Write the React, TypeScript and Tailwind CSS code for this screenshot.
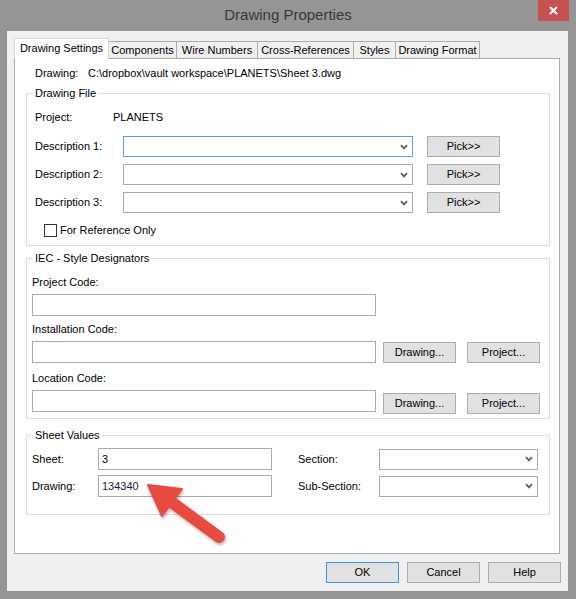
import React from 'react'

const font = { fontFamily: '"Liberation Sans", Arial, sans-serif' }

function Chevron() {
  return (
    <svg width="8" height="6" viewBox="0 0 8 6" className="shrink-0">
      <path d="M1 1.2 L4 4.4 L7 1.2" fill="none" stroke="#5f5f5f" strokeWidth="1.8" />
    </svg>
  )
}

function Combo({ width, focused = false }: { width: string; focused?: boolean }) {
  return (
    <div
      className={`${width} h-[21px] bg-white border flex items-center justify-end pr-[4px] ${
        focused ? 'border-[#569de5]' : 'border-[#ababab]'
      }`}
    >
      <Chevron />
    </div>
  )
}

function Btn({ label, width = 'w-[73px]', primary = false }: { label: string; width?: string; primary?: boolean }) {
  return (
    <button
      className={`${width} h-[21px] shrink-0 bg-[#e1e1e1] border text-[11px] leading-[13px] text-black flex items-center justify-center ${
        primary ? 'border-[#3c93e4]' : 'border-[#adadad]'
      }`}
    >
      {label}
    </button>
  )
}

function Group({ title, height, children }: { title: string; height: string; children: React.ReactNode }) {
  return (
    <div className={`relative ml-[11px] w-[524px] ${height} border border-[#dcdcdc]`}>
      <span className="absolute left-[6px] top-[-7px] bg-white px-[2px] leading-[13px]">{title}</span>
      {children}
    </div>
  )
}

const tabs = [
  { label: 'Components', w: 'w-[69px]' },
  { label: 'Wire Numbers', w: 'w-[82px]' },
  { label: 'Cross-References', w: 'w-[97px]' },
  { label: 'Styles', w: 'w-[43px]' },
  { label: 'Drawing Format', w: 'w-[85px]' },
]

export default function App() {
  return (
    <div
      className="relative w-[576px] h-[599px] bg-[#959595] text-[11px] leading-[13px] text-black overflow-hidden"
      style={font}
    >
      {/* title bar */}
      <div className="relative h-[31px] flex items-center justify-center">
        <span className="text-[15px] leading-[18px] text-[#383838] -mt-[1px]">Drawing Properties</span>
        <div className="absolute right-[7px] top-0 w-[31px] h-[21px] bg-[#c75050] flex items-center justify-center">
          <svg width="9" height="9" viewBox="0 0 9 9">
            <path d="M1 1 L8 8 M8 1 L1 8" stroke="white" strokeWidth="2" />
          </svg>
        </div>
      </div>

      {/* client area */}
      <div className="ml-[7px] w-[561px] h-[560px] bg-[#f0f0f0] flex flex-col">
        {/* tabs */}
        <div className="mt-[7px] ml-[7px] h-[20px] flex items-end">
          <div className="relative z-10 w-[95px] h-[21px] -mb-[1px] bg-white border border-b-0 border-[#d9d9d9] flex items-center justify-center pb-[2px]">
            Drawing Settings
          </div>
          {tabs.map((t) => (
            <div
              key={t.label}
              className={`${t.w} h-[17px] -ml-[1px] bg-[#f0f0f0] border border-b-0 border-[#acacac] flex items-center justify-center`}
            >
              {t.label}
            </div>
          ))}
        </div>

        {/* tab panel */}
        <div className="ml-[7px] w-[546px] h-[496px] bg-white border border-[#acacac]">
          <div className="mt-[8px] pl-[20px] h-[13px] flex items-center">
            <span className="w-[53px]">Drawing:</span>
            <span>C:\dropbox\vault workspace\PLANETS\Sheet 3.dwg</span>
          </div>

          <div className="mt-[13px]">
            <Group title="Drawing File" height="h-[153px]">
              <div className="pt-[14px] pl-[8px]">
                <div className="h-[18px] flex items-center">
                  <span className="w-[78px]">Project:</span>
                  <span>PLANETS</span>
                </div>
                {['Description 1:', 'Description 2:', 'Description 3:'].map((d, i) => (
                  <div key={d} className={`h-[21px] flex items-center ${i === 0 ? 'mt-[10px]' : 'mt-[7px]'}`}>
                    <span className="w-[88px]">{d}</span>
                    <Combo width="w-[290px]" focused={i === 0} />
                    <div className="ml-[14px]">
                      <Btn label="Pick>>" />
                    </div>
                  </div>
                ))}
                <div className="mt-[11px] h-[13px] flex items-center pl-[9px]">
                  <div className="w-[13px] h-[13px] bg-white border border-[#333333]" />
                  <span className="ml-[3px]">For Reference Only</span>
                </div>
              </div>
            </Group>
          </div>

          <div className="mt-[12px]">
            <Group title="IEC - Style Designators" height="h-[161px]">
              <div className="pt-[16px] pl-[5px]">
                <div className="h-[14px] flex items-center">Project Code:</div>
                <div className="mt-[5px] w-[344px] h-[22px] border border-[#ababab]" />
                <div className="mt-[6px] h-[14px] flex items-center">Installation Code:</div>
                <div className="mt-[5px] h-[22px] flex items-center">
                  <div className="w-[344px] h-[22px] border border-[#ababab]" />
                  <div className="ml-[7px]">
                    <Btn label="Drawing..." />
                  </div>
                  <div className="ml-[11px]">
                    <Btn label="Project..." />
                  </div>
                </div>
                <div className="mt-[8px] h-[14px] flex items-center">Location Code:</div>
                <div className="mt-[5px] h-[22px] flex items-center">
                  <div className="w-[344px] h-[22px] border border-[#ababab]" />
                  <div className="ml-[7px] mt-[4px]">
                    <Btn label="Drawing..." />
                  </div>
                  <div className="ml-[11px] mt-[4px]">
                    <Btn label="Project..." />
                  </div>
                </div>
              </div>
            </Group>
          </div>

          <div className="mt-[16px]">
            <Group title="Sheet Values" height="h-[80px]">
              <div className="pt-[12px] pl-[5px]">
                <div className="h-[22px] flex items-center">
                  <span className="w-[66px]">Sheet:</span>
                  <div className="w-[174px] h-[22px] border border-[#ababab] flex items-center pl-[3px]">3</div>
                  <span className="ml-[26px] w-[81px]">Section:</span>
                  <Combo width="w-[159px]" />
                </div>
                <div className="mt-[5px] h-[22px] flex items-center">
                  <span className="w-[66px]">Drawing:</span>
                  <div className="w-[174px] h-[22px] border border-[#ababab] flex items-center pl-[3px] text-[#1a1a40]">
                    134340
                  </div>
                  <span className="ml-[26px] w-[81px]">Sub-Section:</span>
                  <Combo width="w-[159px]" />
                </div>
              </div>
            </Group>
          </div>
        </div>

        {/* dialog buttons */}
        <div className="mt-[8px] pr-[7px] flex justify-end gap-[8px]">
          <Btn label="OK" primary />
          <Btn label="Cancel" />
          <Btn label="Help" />
        </div>
      </div>

      {/* red annotation arrow */}
      <svg className="absolute inset-0 pointer-events-none" width="576" height="599" viewBox="0 0 576 599">
        <defs>
          <filter id="sh" x="-20%" y="-20%" width="140%" height="140%">
            <feDropShadow dx="1" dy="2" stdDeviation="1.5" floodColor="#000" floodOpacity="0.3" />
          </filter>
        </defs>
        <g filter="url(#sh)" fill="#e84c3d" stroke="#e84c3d">
          <line x1="170" y1="501" x2="219" y2="537" strokeWidth="12" strokeLinecap="round" />
          <polygon points="148,485 182,489 162,516" strokeWidth="2" strokeLinejoin="round" />
        </g>
      </svg>
    </div>
  )
}
